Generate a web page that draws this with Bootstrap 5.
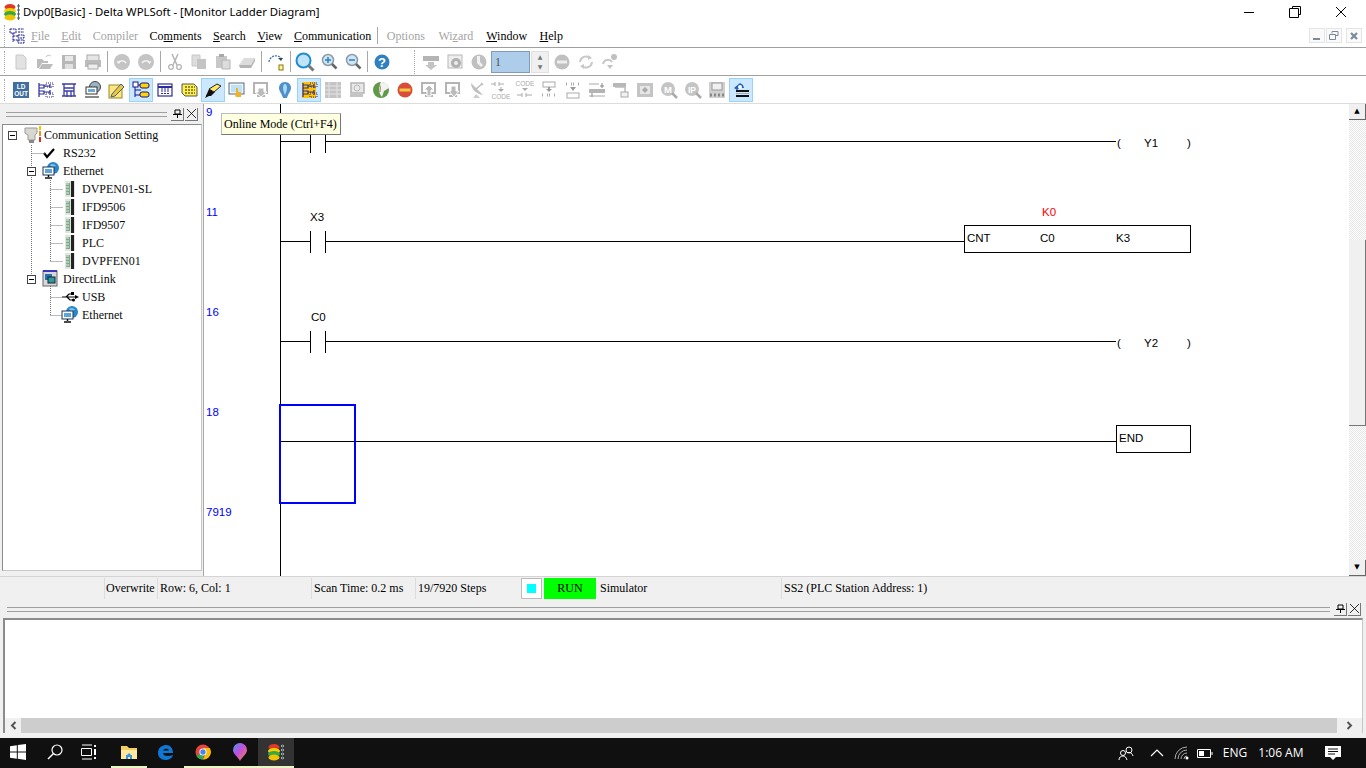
<!DOCTYPE html>
<html lang="en">
<head>
  <meta charset="UTF-8">
  <meta name="viewport" content="width=device-width, initial-scale=1.0">
  <title>Delta WPLSoft</title>
  <link href="https://cdn.jsdelivr.net/npm/bootstrap@5.3.3/dist/css/bootstrap.min.css" rel="stylesheet">
  <script src="https://cdn.jsdelivr.net/npm/bootstrap@5.3.3/dist/js/bootstrap.bundle.min.js"></script>
  <style>
    html, body { width: 1366px; height: 768px; overflow: hidden; }
    body { font-family: "Liberation Serif", serif; font-size: 12px; line-height: 16px; color: #000; background: #fff; }
    svg { display: block; flex: none; }

    .title-row { height: 24px; font-family: "Noto Sans", sans-serif; font-size: 11.35px; }
    .title-row .app-ico { margin: 0 2px 0 3px; }
    .win-btn { width: 46px; height: 20px; }
    .win-btns { margin-right: 2px; }

    .menu-row { height: 24px; border-bottom: 1px solid #a0a0a0; }
    .grip { width: 1px; height: 22px; margin-left: 4px; border-left: 1px dotted #a8a8a8; }
    .menu-ico { margin-left: 3px; margin-right: 5px; }
    .menu-entry { margin-left: 11.5px; white-space: nowrap; }
    .menu-entry.off { color: #a4a4a4; }
    .menu-entry.first { margin-left: 0; }
    .menu-entry.wide1 { margin-left: 13.5px; }
    .menu-entry.wide2 { margin-left: 13px; }
    .menu-entry.wide3 { margin-left: 12.5px; }
    .menu-sep { width: 1px; height: 17px; background: #a8a8a8; margin-left: 6px; margin-right: -3px; }
    .mdi-btn { width: 16px; height: 15px; border: 1px solid #e4e4e4; background: #fafafa; margin-left: 1px; }

    .tool-row { height: 28px; padding-left: 4px; border-bottom: 1px solid #a0a0a0; }
    .tool-row.last { border-bottom-color: #dcdcdc; }
    .tool-btn { width: 24px; height: 24px; padding: 0; border: 1px solid transparent; border-radius: 0; display: flex; align-items: center; justify-content: center; }
    .tool-btn.on { background: #cce8ff; border-color: #99d1ff; }
    .tool-sep { width: 1px; height: 21px; background: #a8a8a8; margin: 0 2px; }
    .row-grip { height: 24px; width: 1px; border-left: 1px dotted #a8a8a8; margin: 0 4px 0 20px; }
    .step-input { width: 39px; height: 22px; background: #aecdea; border: 1px solid #7f9db9; color: #555; padding: 2px 0 0 3px; font-size: 12px; }
    .step-spin { width: 18px; height: 22px; background: #f0f0f0; border: 1px solid #e0e0e0; margin: 0 1px; }
    .step-spin i { flex: 1; display: flex; align-items: center; justify-content: center; color: #777; font-size: 6px; line-height: 6px; font-style: normal; font-family: "DejaVu Sans", sans-serif; }

    .work-row { height: 472px; }
    .side-pane { width: 204px; background: #f0f0f0; padding: 0 1px 0 2px; border-right: 1px solid #a8a8a8; }
    .pane-head { height: 20px; }
    .dock-lines { height: 5px; border-top: 1px solid #a0a0a0; border-bottom: 1px solid #a0a0a0; }
    .dock-btn { width: 13px; height: 13px; margin-left: 1px; background: #f0f0f0; border-right: 1px solid #777; border-bottom: 1px solid #777; }
    .tree-box { height: 447px; padding-top: 1px; background: #fff; border: 1px solid #c8c8c8; border-top-color: #8c8c8c; border-left-color: #8c8c8c; }
    .tree-row { height: 18px; white-space: nowrap; color: #0c0c0c; }
    .lv0 { padding-left: 20px; }
    .lv1 { padding-left: 39px; }
    .lv2 { padding-left: 58px; }
    .tree-ico { width: 21px; }
    .tree-lines { left: 0; top: 0; }

    .ladder-pane { width: 1145px; }
    .ladder-pane text { font-family: "Liberation Sans", sans-serif; font-size: 11.5px; }
    .rung { stroke: #000; stroke-width: 1; shape-rendering: crispEdges; }
    .hint-box { left: 17px; top: 9px; width: 120px; height: 22px; padding: 2px 2px; background: #ffffe1; border: 1px solid #bcbcbc; border-right-color: #777; border-bottom-color: #777; white-space: nowrap; }

    .vscroll { width: 17px; }
    .scroll-track { background: repeating-conic-gradient(#e6e6e6 0 25%, #fff 0 50%) 0 0 / 2px 2px; }
    .scroll-end { height: 16px; background: #f0f0f0; border-right: 1px solid #666; border-bottom: 1px solid #666; font-size: 7px; line-height: 14px; font-family: "DejaVu Sans", sans-serif; }
    .scroll-thumb { height: 186px; margin-top: 120px; background: #f0f0f0; border-right: 1px solid #777; border-bottom: 1px solid #777; }

    .status-row { height: 24px; background: #f0f0f0; border-top: 1px solid #d4d4d4; white-space: nowrap; padding-top: 1px; }
    .status-cell { height: 21px; padding: 2px 0 0 2px; border-left: 1px solid #dcdcdc; }
    .status-cell.tight { padding-left: 1px; }
    .run-led { width: 21px; height: 21px; background: #fff; border: 1px solid #bbb; margin: 0 2px 0 0; }
    .run-led b { width: 9px; height: 9px; background: #00ffff; }
    .run-tag { width: 52px; height: 21px; background: #00ff00; padding-top: 2px; }

    .out-pane { height: 138px; background: #f0f0f0; padding: 0 3px 0 3px; }
    .out-head { height: 18px; padding-left: 4px; padding-right: 2px; }
    .out-box { height: 115px; background: #fff; border-top: 2px solid #8c8c8c; border-left: 2px solid #8c8c8c; border-right: 1px solid #c8c8c8; }
    .hscroll { height: 15px; background: #cdcdcd; }
    .hs-end { background: #f0f0f0; }
    .hs-left { width: 16px; }
    .hs-right { width: 25px; }

    .task-row { height: 30px; background: #101010; color: #fff; font-family: "Open Sans", sans-serif; font-size: 12px; }
    .task-btn { height: 30px; border-bottom: 2px solid transparent; }
    .task-btn.run { border-bottom-color: #e9f5c3; }
    .task-btn.cur { background: #333; }
    .tw31 { width: 31px; }
    .tw36 { width: 36px; }
    .tw37 { width: 37px; }
    .task-gap { margin-left: 7px; }
    .tray-chev { margin-left: 7px; }
    .tray-wifi { margin-left: 10px; }
    .tray-batt { margin-left: 7px; }
    .tray-eng { margin-left: 10px; }
    .tray-time { margin-left: 11px; }
    .tray-note { margin-left: 21.5px; margin-right: 25px; }
  </style>
</head>
<body>
<svg width="0" height="0" class="position-absolute">
  <symbol id="stack" viewBox="0 0 18 18">
    <ellipse cx="7" cy="4" rx="5.5" ry="3" fill="#e0392a"/>
    <ellipse cx="7" cy="8" rx="6" ry="3" fill="#f5d000"/>
    <ellipse cx="7" cy="11" rx="6" ry="3" fill="#35a845"/>
    <ellipse cx="7" cy="14.500" rx="5.500" ry="3" fill="#f0c400"/>
    <path d="M14 3h3M14 7h3M14 11h3M14 15h3" stroke="#9aa7b5" stroke-width="2"/>
    <path d="M15.500 1v16" stroke="#566" stroke-width="1"/>
  </symbol>
  <symbol id="pcglobe" viewBox="0 0 18 18">
    <circle cx="11" cy="6" r="6" fill="#2a86c8"/>
    <path d="M8 3c2-2 5-1 6 1-2 0-2 2-4 2z" fill="#7cc4ee"/>
    <rect x="1" y="5" width="11" height="8" fill="#fff" stroke="#1d3557"/>
    <rect x="3" y="7" width="7" height="4" fill="#5aa6dc"/>
    <path d="M6.500 13v2M3 16h7" stroke="#111" stroke-width="1.500"/>
  </symbol>
  <symbol id="chip" viewBox="0 0 18 18">
    <rect x="4" y="1" width="10" height="16" fill="#dfe7df"/>
    <rect x="5" y="3" width="4" height="12" fill="#7fa88a"/>
    <path d="M10 1h3v16h-3z" fill="#222"/>
    <path d="M5 4h3M5 7h3M5 10h3M5 13h3" stroke="#e6ece6"/>
  </symbol>
  <symbol id="magplus" viewBox="0 0 18 18">
    <circle cx="8" cy="7" r="5.500" fill="#cfe6f5" stroke="#8d9aa5" stroke-width="1.500"/>
    <path d="M12 11l4.500 4.500" stroke="#666" stroke-width="2.500"/>
  </symbol>
  <symbol id="graypc" viewBox="0 0 18 18">
    <rect x="2" y="2" width="13" height="10" fill="#fff" stroke="#b4b4b4" stroke-width="2"/>
    <path d="M5 14h8v2H5z" fill="#b4b4b4"/>
  </symbol>
  <symbol id="graylad" viewBox="0 0 18 18">
    <rect x="1" y="1" width="16" height="16" fill="#c4c4c4"/>
    <path d="M5 1v16M13 1v16M1 5h16M1 9h16M1 13h16" stroke="#e4e4e4"/>
  </symbol>
  <symbol id="bladder" viewBox="0 0 18 18">
    <path d="M3 2v14M3 4h5v3H3M3 10h5v3H3M8 5h6M8 11h6M14 3v4M14 9v5" fill="none" stroke="#2a2a9a" stroke-width="1.200"/>
    <path d="M10 2h7v4h-7zM10 12h7v4h-7z" fill="none" stroke="#2a2a9a" stroke-dasharray="1 1"/>
  </symbol>
</svg>

<div class="d-flex flex-column vh-100">

  <!-- title bar -->
  <div class="title-row d-flex align-items-center">
    <svg class="app-ico" width="18" height="18"><use href="#stack"/></svg>
    <span class="flex-grow-1">Dvp0[Basic] - Delta WPLSoft - [Monitor Ladder Diagram]</span>
    <div class="win-btns d-flex">
      <div class="win-btn d-flex align-items-center justify-content-center"><svg width="12" height="12"><path d="M1 6.500h10" stroke="#000"/></svg></div>
      <div class="win-btn d-flex align-items-center justify-content-center"><svg width="12" height="12"><path d="M3.500 2.500v-2h8v8h-2M.5 2.500h9v9h-9z" fill="none" stroke="#000"/></svg></div>
      <div class="win-btn d-flex align-items-center justify-content-center"><svg width="12" height="12"><path d="M1 1l10 10M11 1L1 11" stroke="#000"/></svg></div>
    </div>
  </div>

  <!-- menu bar -->
  <div class="menu-row d-flex align-items-center">
    <div class="grip"></div>
    <svg class="menu-ico" width="18" height="18" viewBox="0 0 18 18"><path d="M2 2h6v4H2zM10 2h6M10 5h6M5 6v9M5 9h5M5 13h5M10 8h6v3h-6zM10 13h6v3h-6z" fill="none" stroke="#14148c" stroke-dasharray="2 .7"/></svg>
    <span class="menu-entry first off"><u>F</u>ile</span>
    <span class="menu-entry off"><u>E</u>dit</span>
    <span class="menu-entry off">Compiler</span>
    <span class="menu-entry">Co<u>m</u>ments</span>
    <span class="menu-entry"><u>S</u>earch</span>
    <span class="menu-entry"><u>V</u>iew</span>
    <span class="menu-entry"><u>C</u>ommunication</span>
    <span class="menu-sep"></span>
    <span class="menu-entry off">Options</span>
    <span class="menu-entry wide1 off">Wi<u>z</u>ard</span>
    <span class="menu-entry wide2"><u>W</u>indow</span>
    <span class="menu-entry wide3"><u>H</u>elp</span>
    <div class="ms-auto d-flex me-1">
      <div class="mdi-btn d-flex align-items-center justify-content-center"><svg width="10" height="10"><path d="M1 8h7" stroke="#7a8a9a" stroke-width="2"/></svg></div>
      <div class="mdi-btn d-flex align-items-center justify-content-center"><svg width="10" height="10"><path d="M3 2.500V.5h6v4H7M.5 3.500h6v5h-6z" fill="none" stroke="#7a8a9a"/></svg></div>
      <div class="mdi-btn d-flex align-items-center justify-content-center ms-1"><svg width="10" height="10"><path d="M2 2l6 6M8 2L2 8" stroke="#7a8a9a" stroke-width="2.200"/></svg></div>
    </div>
  </div>

  <!-- standard toolbar -->
  <div class="tool-row d-flex align-items-center">
    <div class="grip m-0 me-1"></div>
    <div class="d-flex align-items-center">
      <div class="tool-btn"><svg width="18" height="18"><path d="M4 2h7l3 3v11H4z" fill="#e2e2e2" stroke="#c8c8c8"/></svg></div>
      <div class="tool-btn"><svg width="18" height="18"><path d="M1 15V6h5l2 2h4v2H6l-3 5zM3 16l3-5h11l-3 5z" fill="#bcbcbc"/><path d="M10 4c1-2 3-2 5-1" fill="none" stroke="#c4c4c4"/></svg></div>
      <div class="tool-btn"><svg width="18" height="18"><rect x="2" y="2" width="14" height="14" fill="#b8b8b8"/><rect x="5" y="3" width="8" height="5" fill="#e8e8e8"/><rect x="5" y="11" width="8" height="5" fill="#e0e0e0"/></svg></div>
      <div class="tool-btn"><svg width="18" height="18"><rect x="3" y="2" width="12" height="6" fill="#e6e6e6" stroke="#aaa"/><rect x="1" y="7" width="16" height="7" fill="#bbb"/><rect x="4" y="11" width="10" height="5" fill="#eee" stroke="#aaa"/></svg></div>
      <div class="tool-sep"></div>
      <div class="tool-btn"><svg width="18" height="18"><circle cx="9" cy="9" r="8" fill="#c4c4c4"/><path d="M5 10a4.500 4 0 0 1 8 0" fill="none" stroke="#f4f4f4" stroke-width="1.500"/><path d="M3.500 8l2 3 2-2z" fill="#f4f4f4"/></svg></div>
      <div class="tool-btn"><svg width="18" height="18"><circle cx="9" cy="9" r="8" fill="#c4c4c4"/><path d="M5 10a4.500 4 0 0 1 8 0" fill="none" stroke="#f4f4f4" stroke-width="1.500"/><path d="M14.500 8l-2 3-2-2z" fill="#f4f4f4"/></svg></div>
      <div class="tool-sep"></div>
      <div class="tool-btn"><svg width="18" height="18"><path d="M6 1l5 11M12 1L7 12" stroke="#b4b4b4" stroke-width="1.500"/><circle cx="5" cy="14" r="2.300" fill="none" stroke="#b4b4b4" stroke-width="1.300"/><circle cx="13" cy="14" r="2.300" fill="none" stroke="#b4b4b4" stroke-width="1.300"/></svg></div>
      <div class="tool-btn"><svg width="18" height="18"><path d="M2 2h8v11H2z" fill="#dcdcdc" stroke="#c8c8c8"/><path d="M7 6h9v10H7z" fill="#c4c4c4"/></svg></div>
      <div class="tool-btn"><svg width="18" height="18"><path d="M2 3h11v12H2z" fill="#c8c8c8"/><path d="M5 1h5v3H5z" fill="#a8a8a8"/><path d="M8 7h8v9H8z" fill="#dcdcdc" stroke="#b4b4b4"/></svg></div>
      <div class="tool-btn"><svg width="18" height="18"><path d="M1 12l5-7h11l-4 7z" fill="#dcdcdc"/><path d="M1 12h12v3H2zM13 12l4-7v3l-4 7z" fill="#b4b4b4"/></svg></div>
      <div class="tool-sep"></div>
      <div class="tool-btn"><svg width="18" height="18"><path d="M2 9a7 7 0 0 1 12-4" fill="none" stroke="#3a74b8" stroke-width="1.300" stroke-dasharray="2 1"/><path d="M11 5h5l-2 3z" fill="#345"/><rect x="12" y="12" width="4" height="5" fill="#fff3a8" stroke="#8a7a00"/></svg></div>
      <div class="tool-sep"></div>
      <div class="tool-btn"><svg width="20" height="20" viewBox="0 0 20 20"><circle cx="8.500" cy="8.500" r="7" fill="#bfe3f8" stroke="#1e8ed2" stroke-width="2"/><path d="M13.500 13.500l5 5" stroke="#777" stroke-width="3"/></svg></div>
      <div class="tool-btn"><svg width="18" height="18"><use href="#magplus"/><path d="M5 7h6M8 4v6" stroke="#2a7fc4" stroke-width="1.500"/></svg></div>
      <div class="tool-btn"><svg width="18" height="18"><use href="#magplus"/><path d="M5 7h6" stroke="#2a7fc4" stroke-width="1.500"/></svg></div>
      <div class="tool-sep"></div>
      <div class="tool-btn"><svg width="18" height="18"><circle cx="9" cy="9" r="7.500" fill="#2f7fc1"/><text x="9" y="13.500" text-anchor="middle" fill="#fff" font-family="Liberation Sans" font-weight="700" font-size="13">?</text></svg></div>
    </div>
    <div class="row-grip"></div>
    <div class="d-flex align-items-center">
      <div class="tool-btn"><svg width="18" height="18"><path d="M1 3h16v5H1z" fill="#b4b4b4"/><path d="M6 9h6v3h3l-6 5-6-5h3z" fill="#c4c4c4"/></svg></div>
      <div class="tool-btn"><svg width="18" height="18"><rect x="2" y="2" width="14" height="13" fill="#eee" stroke="#b8b8b8"/><circle cx="10" cy="10" r="5" fill="#b0b0b0"/><circle cx="10" cy="10" r="2" fill="#eee"/></svg></div>
      <div class="tool-btn"><svg width="18" height="18"><circle cx="9" cy="9" r="7.500" fill="#c0c0c0"/><path d="M7 3h3v6l3 3-2 2-4-4z" fill="#f2f2f2"/></svg></div>
      <div class="step-input">1</div>
      <div class="step-spin d-flex flex-column"><i>▲</i><i>▼</i></div>
      <div class="tool-btn"><svg width="18" height="18"><circle cx="9" cy="9" r="7.500" fill="#c0c0c0"/><rect x="4" y="7.500" width="10" height="3" fill="#eee"/></svg></div>
      <div class="tool-btn"><svg width="18" height="18"><path d="M3 9a6 6 0 0 1 10-4M15 9a6 6 0 0 1-10 4" fill="none" stroke="#c8c8c8" stroke-width="2"/><path d="M11 2l4 3-4 2zM7 16l-4-3 4-2z" fill="#c8c8c8"/></svg></div>
      <div class="tool-btn"><svg width="18" height="18"><circle cx="13" cy="4" r="3" fill="#c0c0c0"/><path d="M2 11a5 5 0 0 1 9-2" fill="none" stroke="#c8c8c8" stroke-width="2"/><path d="M6 12h6l-3 4z" fill="#c4c4c4"/></svg></div>
    </div>
  </div>

  <!-- monitor toolbar -->
  <div class="tool-row last d-flex align-items-center">
    <div class="grip m-0 me-1"></div>
    <div class="d-flex align-items-center">
      <div class="tool-btn"><svg width="16" height="16"><rect width="16" height="16" fill="#3f6f9f"/><text x="8" y="7" text-anchor="middle" fill="#fff" font-family="Liberation Sans" font-weight="700" font-size="6.500">LD</text><text x="8" y="14" text-anchor="middle" fill="#fff" font-family="Liberation Sans" font-weight="700" font-size="6.500">OUT</text></svg></div>
      <div class="tool-btn"><svg width="18" height="18"><use href="#bladder"/></svg></div>
      <div class="tool-btn"><svg width="18" height="18"><path d="M2 3h14M4 3v12M14 3v12M4 7h10v3H4zM7 10v6M11 10v6M2 15h14" fill="none" stroke="#3c3ca8" stroke-width="1.300"/></svg></div>
      <div class="tool-btn"><svg width="18" height="18"><circle cx="11" cy="6" r="5.500" fill="#9db4c4" stroke="#444"/><rect x="2" y="6" width="11" height="7" fill="#fff" stroke="#333"/><rect x="4" y="8" width="7" height="3" fill="#6aaad8"/><path d="M1 15h14v2H1z" fill="#888"/></svg></div>
      <div class="tool-btn"><svg width="18" height="18"><rect x="1" y="4" width="13" height="13" fill="#ffe680" stroke="#9a8a20"/><path d="M4 13l9-10 3 3-9 9-4 1z" fill="#f3c72e" stroke="#3b5fa8"/></svg></div>
      <div class="tool-btn on"><svg width="18" height="18"><path d="M3 2v14M3 4h6M3 9h6M3 14h6" stroke="#14148c" fill="none"/><rect x="1" y="1" width="5" height="5" fill="#fff" stroke="#14148c"/><rect x="8" y="2" width="9" height="5" rx="2" fill="#ffd400" stroke="#14148c"/><rect x="8" y="11" width="9" height="5" rx="2" fill="#ffd400" stroke="#14148c"/></svg></div>
      <div class="tool-btn"><svg width="18" height="18"><rect x="2" y="3" width="14" height="12" fill="#fff" stroke="#2c2c9c" stroke-width="1.200"/><path d="M2 6h14" stroke="#2c2c9c" stroke-width="2"/><path d="M5 8h8M5 10h8M5 12.500h8" stroke="#2c2c9c" stroke-dasharray="2 1"/></svg></div>
      <div class="tool-btn"><svg width="18" height="18"><path d="M2 3h12l3 3v9H5l-3-3z" fill="#fff04a" stroke="#555"/><path d="M5 6h10M5 9h10M5 12h10" stroke="#222" stroke-dasharray="2 1"/></svg></div>
      <div class="tool-btn on"><svg width="20" height="18" viewBox="0 0 20 18"><path d="M3 15l3-7 6 3-4 4z" fill="#111"/><path d="M6 8l8-5 4 2-7 6z" fill="#ffe76a" stroke="#222"/><path d="M2 17l2-4 2 2z" fill="#111"/></svg></div>
      <div class="tool-btn"><svg width="18" height="18"><rect x="1" y="2" width="15" height="11" fill="#eaf5ff" stroke="#5a6a7a"/><rect x="3" y="4" width="11" height="7" fill="#bfe0f5"/><path d="M8 7h2v4h3v5H8l-2-4 2 1z" fill="#f0b030"/></svg></div>
      <div class="tool-btn"><svg width="18" height="18"><use href="#graypc"/><path d="M6 7h6v4h3l-6 5-6-5h3z" fill="#bbb" stroke="#fff"/></svg></div>
      <div class="tool-btn"><svg width="18" height="18"><path d="M9 1c4 0 6 3 6 6s-3 6-4 10H7C6 13 3 10 3 7s2-6 6-6z" fill="#4f8fc8"/><path d="M9 3c1.500 0 2 2 2 4s-1 5-2 7c-1-2-2-5-2-7s.5-4 2-4z" fill="#a8d8f4"/></svg></div>
      <div class="tool-btn on"><svg width="18" height="18"><rect x="2" y="1" width="14" height="16" fill="#ffc400"/><use href="#bladder"/></svg></div>
      <div class="tool-btn"><svg width="18" height="18"><use href="#graylad"/></svg></div>
      <div class="tool-btn"><svg width="18" height="18"><rect x="3" y="2" width="13" height="10" fill="#e8e8e8" stroke="#b4b4b4" stroke-width="1.500"/><circle cx="9" cy="7" r="3" fill="none" stroke="#bbb"/><path d="M2 13h13v3H2z" fill="#c4c4c4"/></svg></div>
      <div class="tool-btn"><svg width="18" height="18"><circle cx="9" cy="9" r="8" fill="#5f9a4a"/><path d="M9 1c4 0 7 2 8 6l-5 3-2 6c-2-2-3-5-3-8s1-5 2-7z" fill="#f2f2f2"/><path d="M7 3c2 2 1 6 1 8" stroke="#a08050" fill="none"/></svg></div>
      <div class="tool-btn"><svg width="18" height="18"><circle cx="9" cy="9" r="7.500" fill="#d94c3a"/><rect x="3.500" y="7.500" width="11" height="3" fill="#f5c842"/></svg></div>
      <div class="tool-btn"><svg width="18" height="18"><use href="#graypc"/><path d="M9 4l5 5h-3v6H7V9H4z" fill="#bbb" stroke="#fff"/></svg></div>
      <div class="tool-btn"><svg width="18" height="18"><use href="#graypc"/><path d="M7 5h5v5h3l-5 6-5-6h2z" fill="#bbb" stroke="#fff"/></svg></div>
      <div class="tool-btn"><svg width="18" height="18"><path d="M3 2c0 6 5 11 12 12z" fill="#c0c0c0"/><path d="M8 8l6-5M13 2l2 2" stroke="#bbb" stroke-width="1.500"/><path d="M8 13l-3 4h7z" fill="#ccc"/></svg></div>
      <div class="tool-btn"><svg width="20" height="20" viewBox="0 0 20 20"><path d="M4 2v4M8 2v4M4 4H0M8 4h5M10 7v3" stroke="#aaa" fill="none"/><path d="M7 9h6l-3 3z" fill="#aaa"/><text x="10" y="18.500" text-anchor="middle" fill="#aaa" font-family="Liberation Sans" font-size="6.500">CODE</text></svg></div>
      <div class="tool-btn"><svg width="20" height="20" viewBox="0 0 20 20"><text x="10" y="6" text-anchor="middle" fill="#aaa" font-family="Liberation Sans" font-size="6.500">CODE</text><path d="M7 8h6l-3 3z" fill="#aaa"/><path d="M7 13v4M11 13v4M7 15H2M11 15h6" stroke="#aaa" fill="none"/></svg></div>
      <div class="tool-btn"><svg width="18" height="18"><rect x="3" y="1" width="12" height="5" fill="none" stroke="#aaa"/><path d="M6 8h6l-3 3z" fill="#999"/><rect x="8" y="6" width="2" height="3" fill="#999"/><path d="M2 14h2M7 14h4M14 14h2" stroke="#aaa" stroke-width="3" stroke-dasharray="1 1"/></svg></div>
      <div class="tool-btn"><svg width="18" height="18"><path d="M2 3h2M7 3h4M14 3h2" stroke="#aaa" stroke-width="3" stroke-dasharray="1 1"/><path d="M6 6h6l-3 4z" fill="#999"/><rect x="3" y="12" width="12" height="5" fill="none" stroke="#aaa"/></svg></div>
      <div class="tool-btn"><svg width="18" height="18"><path d="M1 3h10M1 15h16" stroke="#aaa"/><rect x="1" y="8" width="16" height="4" fill="#b4b4b4"/><path d="M14 2v5M12 5h4M4 12v4" stroke="#888"/></svg></div>
      <div class="tool-btn"><svg width="18" height="18"><rect x="1" y="2" width="13" height="4" fill="#b8b8b8"/><path d="M3 6h10v9" fill="none" stroke="#bbb" stroke-width="1.500"/><rect x="9" y="11" width="7" height="5" fill="#f2f2f2" stroke="#aaa"/></svg></div>
      <div class="tool-btn"><svg width="18" height="18"><rect x="1" y="2" width="16" height="14" fill="#c4c4c4"/><rect x="4" y="5" width="10" height="8" fill="#e6e6e6"/><path d="M6 9l3-3 3 3-3 3z" fill="#aaa"/></svg></div>
      <div class="tool-btn"><svg width="18" height="18"><circle cx="8" cy="8" r="7" fill="#c4c4c4"/><path d="M12 12l5 5" stroke="#aaa" stroke-width="2.500"/><text x="8" y="11.500" text-anchor="middle" fill="#fff" font-family="Liberation Sans" font-weight="700" font-size="9.500">M</text></svg></div>
      <div class="tool-btn"><svg width="18" height="18"><circle cx="8" cy="8" r="7" fill="#c4c4c4"/><path d="M12 12l5 5" stroke="#aaa" stroke-width="2.500"/><text x="8" y="11.500" text-anchor="middle" fill="#fff" font-family="Liberation Sans" font-weight="700" font-size="8.500">IP</text></svg></div>
      <div class="tool-btn"><svg width="18" height="18"><rect x="1" y="1" width="16" height="16" fill="#d0d0d0"/><rect x="4" y="2" width="10" height="7" fill="#f0f0f0" stroke="#999"/><path d="M2 14h14" stroke="#888" stroke-width="3" stroke-dasharray="2 2"/></svg></div>
      <div class="tool-btn on"><svg width="18" height="18"><path d="M2 7l6-5 3 2 1 3H8L5 9z" fill="#1f5fbf"/><circle cx="8" cy="6" r="2" fill="#fff"/><path d="M4 10h13" stroke="#111" stroke-width="2"/><path d="M4 12.500h13" stroke="#aaa"/><path d="M4 15h13" stroke="#111" stroke-width="2"/></svg></div>
    </div>
  </div>

  <!-- tree + ladder -->
  <div class="work-row d-flex">
    <div class="side-pane d-flex flex-column">
      <div class="pane-head d-flex align-items-center ps-1 pe-1">
        <div class="dock-lines flex-grow-1"></div>
        <div class="dock-btn d-flex align-items-center justify-content-center ms-1"><svg width="9" height="9"><path d="M2 1h5v4H2zM0 5.500h9M4.500 5v4" fill="none" stroke="#000"/></svg></div>
        <div class="dock-btn d-flex align-items-center justify-content-center"><svg width="9" height="9"><path d="M0 0l9 9M9 0L0 9" stroke="#000" stroke-width=".8"/></svg></div>
      </div>
      <div class="tree-box position-relative">
        <svg class="tree-lines position-absolute" width="60" height="210" viewBox="3 125 60 210">
          <g fill="none" stroke="#777" stroke-dasharray="1 1">
            <path d="M12.500 140v-1M31.500 145v134M31.500 153.500h13M31.500 171.500h4M31.500 279.500h4"/>
            <path d="M50.500 178v83M50.500 189.500h13M50.500 207.500h13M50.500 225.500h13M50.500 243.500h13M50.500 261.500h13"/>
            <path d="M50.500 286v29M50.500 297.500h13M50.500 315.500h13"/>
          </g>
          <g fill="#fff" stroke="#444">
            <rect x="8.500" y="131.500" width="8" height="8"/>
            <rect x="27.500" y="167.500" width="8" height="8"/>
            <rect x="27.500" y="275.500" width="8" height="8"/>
          </g>
          <path d="M10 135.500h5M29 171.500h5M29 279.500h5" stroke="#000"/>
        </svg>
        <div class="tree-row d-flex align-items-center lv0"><svg class="tree-ico" width="21" height="18" viewBox="0 0 21 18"><path d="M2 2h12v5l-2 2v5H5V9L2 7z" fill="#d8d8d0" stroke="#999"/><path d="M6 14h5v3H6z" fill="#888"/><path d="M16 0h2v4h-2z" fill="#f5c400"/><path d="M16 5h2v5h-2z" fill="#f09020"/><path d="M16 11h2v5h-2z" fill="#d83020"/></svg>Communication Setting</div>
        <div class="tree-row d-flex align-items-center lv1"><svg class="tree-ico" width="21" height="18" viewBox="0 0 21 18"><path d="M2 9l3 4 7-8" fill="none" stroke="#000" stroke-width="2.200"/></svg>RS232</div>
        <div class="tree-row d-flex align-items-center lv1"><svg class="tree-ico" width="21" height="18" viewBox="0 0 21 18"><use href="#pcglobe" width="18" height="18"/></svg>Ethernet</div>
        <div class="tree-row d-flex align-items-center lv2"><svg class="tree-ico" width="21" height="18" viewBox="0 0 21 18"><use href="#chip" width="18" height="18"/></svg>DVPEN01-SL</div>
        <div class="tree-row d-flex align-items-center lv2"><svg class="tree-ico" width="21" height="18" viewBox="0 0 21 18"><use href="#chip" width="18" height="18"/></svg>IFD9506</div>
        <div class="tree-row d-flex align-items-center lv2"><svg class="tree-ico" width="21" height="18" viewBox="0 0 21 18"><use href="#chip" width="18" height="18"/></svg>IFD9507</div>
        <div class="tree-row d-flex align-items-center lv2"><svg class="tree-ico" width="21" height="18" viewBox="0 0 21 18"><use href="#chip" width="18" height="18"/></svg>PLC</div>
        <div class="tree-row d-flex align-items-center lv2"><svg class="tree-ico" width="21" height="18" viewBox="0 0 21 18"><use href="#chip" width="18" height="18"/></svg>DVPFEN01</div>
        <div class="tree-row d-flex align-items-center lv1"><svg class="tree-ico" width="21" height="18" viewBox="0 0 21 18"><rect x="1" y="1" width="14" height="15" fill="#d8d8d8" stroke="#666"/><path d="M1 1h14" stroke="#1414c8" stroke-width="1.500"/><rect x="3" y="4" width="7" height="6" fill="#2a6fb0"/><rect x="6" y="7" width="7" height="6" fill="#2f9a9a" stroke="#123"/></svg>DirectLink</div>
        <div class="tree-row d-flex align-items-center lv2"><svg class="tree-ico" width="21" height="18" viewBox="0 0 21 18"><path d="M1 9h14M5 9l3-3h3M6 9l3 3h3" fill="none" stroke="#000" stroke-width="1.200"/><path d="M14 7l4 2-4 2z" fill="#000"/><rect x="10" y="4" width="3" height="3" fill="#000"/><circle cx="12.500" cy="12" r="1.500" fill="#000"/></svg>USB</div>
        <div class="tree-row d-flex align-items-center lv2"><svg class="tree-ico" width="21" height="18" viewBox="0 0 21 18"><use href="#pcglobe" width="18" height="18"/></svg>Ethernet</div>
      </div>
    </div>

    <div class="ladder-pane position-relative">
      <svg width="1145" height="472" viewBox="204 104 1145 472">
        <g class="rung" fill="none">
          <path d="M280.500 104v472"/>
          <path d="M280 141.500h30M325 141.500h791M310.500 131v22M325.500 131v22"/>
          <path d="M280 241.500h30M325 241.500h639M310.500 231v22M325.500 231v22"/>
          <path d="M280 341.500h30M325 341.500h791M310.500 331v22M325.500 331v22"/>
          <path d="M280 441.500h836"/>
          <rect x="964.500" y="225.500" width="226" height="27"/>
          <rect x="1116.500" y="425.500" width="74" height="27"/>
        </g>
        <rect x="280" y="405" width="75" height="98" fill="none" stroke="#0000ff" stroke-width="2" shape-rendering="crispEdges"/>
        <g fill="#0000ff">
          <text x="206" y="116">9</text>
          <text x="206" y="216">11</text>
          <text x="206" y="316">16</text>
          <text x="206" y="416">18</text>
          <text x="206" y="516">7919</text>
        </g>
        <text x="1117" y="147">(</text><text x="1144" y="147">Y1</text><text x="1187" y="147">)</text>
        <text x="1117" y="347">(</text><text x="1144" y="347">Y2</text><text x="1187" y="347">)</text>
        <text x="310" y="221">X3</text>
        <text x="311" y="321">C0</text>
        <text x="1042" y="216" fill="#ff0000">K0</text>
        <text x="967" y="242">CNT</text>
        <text x="1040" y="242">C0</text>
        <text x="1116" y="242">K3</text>
        <text x="1119" y="442">END</text>
      </svg>
      <div class="hint-box position-absolute">Online Mode (Ctrl+F4)</div>
    </div>

    <div class="vscroll d-flex flex-column">
      <div class="scroll-end text-center">▲</div>
      <div class="scroll-track flex-grow-1"><div class="scroll-thumb"></div></div>
      <div class="scroll-end text-center">▼</div>
    </div>
  </div>

  <!-- status bar -->
  <div class="status-row d-flex">
    <div style="width:104px"></div>
    <div class="status-cell tight" style="width:53px">Overwrite</div>
    <div class="status-cell" style="width:154px">Row: 6, Col: 1</div>
    <div class="status-cell" style="width:104px">Scan Time: 0.2 ms</div>
    <div class="status-cell" style="width:106px">19/7920 Steps</div>
    <div class="run-led d-flex align-items-center justify-content-center"><b></b></div>
    <div class="run-tag text-center">RUN</div>
    <div class="status-cell border-0 ps-1" style="width:185px">Simulator</div>
    <div class="status-cell">SS2 (PLC Station Address: 1)</div>
  </div>

  <!-- output pane -->
  <div class="out-pane d-flex flex-column">
    <div class="out-head d-flex align-items-center">
      <div class="dock-lines flex-grow-1"></div>
      <div class="dock-btn d-flex align-items-center justify-content-center ms-1"><svg width="9" height="9"><path d="M2 1h5v4H2zM0 5.500h9M4.500 5v4" fill="none" stroke="#000"/></svg></div>
      <div class="dock-btn d-flex align-items-center justify-content-center"><svg width="9" height="9"><path d="M0 0l9 9M9 0L0 9" stroke="#000" stroke-width=".8"/></svg></div>
    </div>
    <div class="out-box d-flex flex-column justify-content-end">
      <div class="hscroll d-flex">
        <div class="hs-end hs-left d-flex align-items-center justify-content-center"><svg width="7" height="9"><path d="M5.500 1L2 4.500 5.500 8" fill="none" stroke="#555" stroke-width="2"/></svg></div>
        <div class="flex-grow-1"></div>
        <div class="hs-end hs-right d-flex align-items-center justify-content-center"><svg width="7" height="9"><path d="M1.500 1L5 4.500 1.500 8" fill="none" stroke="#555" stroke-width="2"/></svg></div>
      </div>
    </div>
  </div>

  <!-- taskbar -->
  <div class="task-row d-flex align-items-center">
    <div class="task-btn tw36 d-flex align-items-center justify-content-center"><svg width="16" height="16"><path d="M0 2.300l6.800-1v6.200H0zM7.800 1.100L16 0v7.500H7.800zM0 8.500h6.800v6.200l-6.800-1zM7.800 8.500H16V16l-8.200-1.200z" fill="#fff"/></svg></div>
    <div class="task-btn tw37 d-flex align-items-center justify-content-center"><svg width="16" height="16"><circle cx="10" cy="6" r="5" fill="none" stroke="#fff" stroke-width="1.200"/><path d="M6.500 9.500L1 15" stroke="#fff" stroke-width="1.400"/></svg></div>
    <div class="task-btn tw31 d-flex align-items-center justify-content-center"><svg width="16" height="16"><path d="M.5 4.500h10v7H.5zM1 1h10M1 15h10" fill="none" stroke="#fff"/><path d="M14 1v2M14 5v6M14 13v2" stroke="#fff" stroke-width="2"/></svg></div>
    <div class="task-btn run tw36 task-gap d-flex align-items-center justify-content-center"><svg width="18" height="17"><path d="M1 2h6l2 2h8v11H1z" fill="#f3d060"/><path d="M1 6h16v9H1z" fill="#ffe9a0"/><path d="M6 15v-4h1l2-2 2 2h1v4h-2v-2H8v2z" fill="#3a9ad9"/></svg></div>
    <div class="task-btn tw37 d-flex align-items-center justify-content-center"><svg width="17" height="17"><path d="M16 11c-1 4-5 5-7.500 5C4 16 1 13 1 9 1 3 6 1 9.500 1 13 1 16 4 16 9H6c0 3 5 4 10 2zM6 6.500h6C12 4 7 4 6 6.500z" fill="#0f78d4" fill-rule="evenodd"/></svg></div>
    <div class="task-btn run tw37 d-flex align-items-center justify-content-center"><svg width="16" height="16"><circle cx="8" cy="8" r="7.500" fill="#e8453c"/><path d="M8 8L1.500 12A7.500 7.500 0 0 0 8 15.500z" fill="#34a853"/><path d="M8 4h6.700A7.500 7.500 0 0 1 8 15.500L11 9z" fill="#fbbc05"/><path d="M8 8L1.500 12A7.500 7.500 0 0 0 7 15.500l3-5z" fill="#34a853"/><circle cx="8" cy="8" r="3.600" fill="#fff"/><circle cx="8" cy="8" r="2.700" fill="#4285f4"/></svg></div>
    <div class="task-btn run tw37 d-flex align-items-center justify-content-center"><svg width="14" height="18"><defs><linearGradient id="mapg" x1="0" y1="0" x2="1" y2="1"><stop offset="0" stop-color="#3f9be8"/><stop offset=".45" stop-color="#c04ee0"/><stop offset="1" stop-color="#f2883a"/></linearGradient></defs><path d="M7 0a7 7 0 0 1 7 7c0 4-5 7-7 11-2-4-7-7-7-11a7 7 0 0 1 7-7z" fill="url(#mapg)"/></svg></div>
    <div class="task-btn run cur tw36 d-flex align-items-center justify-content-center"><svg width="18" height="18"><use href="#stack"/></svg></div>
    <div class="ms-auto d-flex align-items-center">
      <svg width="17" height="17" class="me-2"><circle cx="11" cy="5" r="3" fill="none" stroke="#fff"/><circle cx="5" cy="8" r="2.500" fill="none" stroke="#fff"/><path d="M1 15c0-3 2-4 4-4s3 1 4 4M9 8c1-1 5-1 6 3" fill="none" stroke="#fff"/></svg>
      <svg class="tray-chev" width="14" height="10"><path d="M1 8l6-6 6 6" fill="none" stroke="#fff" stroke-width="1.200"/></svg>
      <svg class="tray-wifi" width="16" height="14"><path d="M1 13a12 12 0 0 1 12-12M4 13a9 9 0 0 1 9-9M7 13a6 6 0 0 1 6-6M10 13a3 3 0 0 1 3-3" fill="none" stroke="#aaa"/><circle cx="13" cy="12" r="1.500" fill="#fff"/></svg>
      <svg class="tray-batt" width="16" height="9"><path d="M.5.5h13v8H.5z" fill="none" stroke="#fff"/><rect x="2" y="2" width="5" height="5" fill="#fff"/><path d="M15 3v3" stroke="#fff"/></svg>
      <span class="tray-eng">ENG</span>
      <span class="tray-time">1:06 AM</span>
      <svg class="tray-note" width="16" height="16"><path d="M0 1h16v11h-5l-3 3-3-3H0z" fill="#fff"/><path d="M3 4h10M3 6.500h10M3 9h7" stroke="#111"/></svg>
    </div>
  </div>
</div>
</body>
</html>
